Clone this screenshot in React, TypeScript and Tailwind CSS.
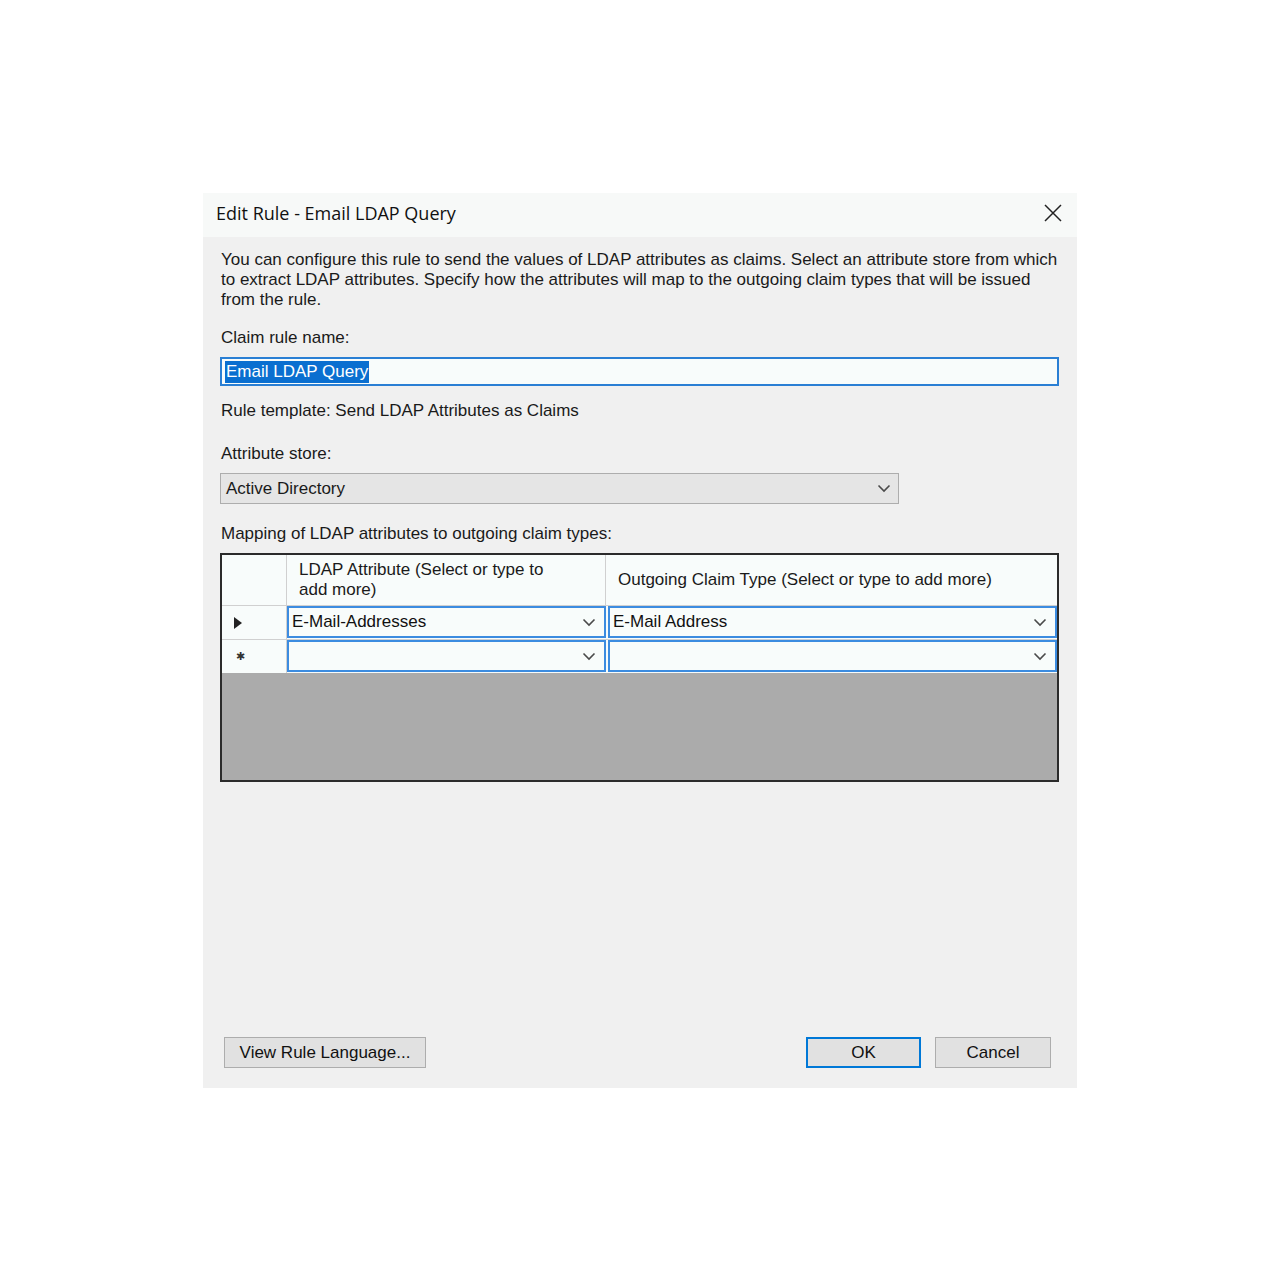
import React from "react";

const font = { fontFamily: '"Liberation Sans", Arial, sans-serif' };

const Chevron = () => (
  <svg width="14" height="9" viewBox="0 0 14 9" className="shrink-0">
    <path d="M1.5 1.5 L7 7 L12.5 1.5" fill="none" stroke="#4a4a4a" strokeWidth="1.6" />
  </svg>
);

const GridCombo = ({ value, w }: { value: string; w: string }) => (
  <div className={`flex h-[32px] ${w} items-center justify-between border-2 border-[#3c8ce0] bg-[#f8fcfb] pl-[3px] pr-[8px]`}>
    <span className="text-[17px] text-[#111]">{value}</span>
    <Chevron />
  </div>
);

export default function App() {
  return (
    <div className="flex h-[1280px] w-[1280px] bg-white" style={font}>
      <div className="ml-[203px] mt-[193px] flex h-[895px] w-[874px] flex-col bg-[#f0f0f0]">
        <div className="flex h-[44px] items-center justify-between bg-[#f7f9f8] pb-[4px] pl-[13px] pr-[14px]">
          <span className="text-[18px] text-[#111]" style={{ fontFamily: '"Open Sans", "Noto Sans", sans-serif' }}>
            Edit Rule - Email LDAP Query
          </span>
          <svg width="20" height="20" viewBox="0 0 20 20">
            <path d="M2 2 L18 18 M18 2 L2 18" stroke="#222" strokeWidth="1.5" />
          </svg>
        </div>

        <div className="flex flex-1 flex-col pl-[17px] pr-[18px] text-[17px] leading-[20px] text-[#1a1a1a]">
          <p className="mt-[13px] pl-[1px]">
            You can configure this rule to send the values of LDAP attributes as claims. Select an attribute store from which
            to extract LDAP attributes. Specify how the attributes will map to the outgoing claim types that will be issued
            from the rule.
          </p>

          <p className="mt-[18px] pl-[1px]">Claim rule name:</p>
          <div className="mt-[9px] flex h-[29px] w-[839px] items-center border-2 border-[#2a7fd4] bg-[#f8fcfb] pl-[3px]">
            <span className="bg-[#0a6fd0] px-[1px] leading-[22px] text-white">Email LDAP Query</span>
          </div>

          <p className="mt-[15px] pl-[1px]">Rule template: Send LDAP Attributes as Claims</p>

          <p className="mt-[23px] pl-[1px]">Attribute store:</p>
          <div className="mt-[9px] flex h-[31px] w-[679px] items-center justify-between border border-[#adadad] bg-[#e5e5e5] pl-[5px] pr-[7px]">
            <span>Active Directory</span>
            <Chevron />
          </div>

          <p className="mt-[20px] pl-[1px]">Mapping of LDAP attributes to outgoing claim types:</p>
          <div className="mt-[9px] flex h-[229px] w-[839px] flex-col border-2 border-[#2b2b2b] bg-[#ababab]">
            <div className="flex h-[51px] border-b border-[#d0d0d0] bg-[#f8fcfb]">
              <div className="w-[65px] border-r border-[#d0d0d0]" />
              <div className="flex w-[319px] items-center border-r border-[#d0d0d0] pl-[12px] leading-[20px]">
                LDAP Attribute (Select or type to
                <br />
                add more)
              </div>
              <div className="flex flex-1 items-center pl-[12px]">Outgoing Claim Type (Select or type to add more)</div>
            </div>
            <div className="flex h-[34px] border-b border-[#d0d0d0] bg-[#f8fcfb]">
              <div className="flex w-[65px] items-center border-r border-[#d0d0d0] pl-[12px]">
                <svg width="8" height="12" viewBox="0 0 8 12">
                  <path d="M0 0 L8 6 L0 12 Z" fill="#222" />
                </svg>
              </div>
              <GridCombo value="E-Mail-Addresses" w="w-[319px]" />
              <div className="w-[2px]" />
              <GridCombo value="E-Mail Address" w="w-[449px]" />
            </div>
            <div className="flex h-[33px] bg-[#f8fcfb]">
              <div className="flex w-[65px] items-center border-r border-[#d0d0d0] pl-[14px]">
                <span className="text-[11px] leading-none text-[#333]">✱</span>
              </div>
              <GridCombo value="" w="w-[319px]" />
              <div className="w-[2px]" />
              <GridCombo value="" w="w-[449px]" />
            </div>
            <div className="flex-1" />
          </div>

          <div className="flex-1" />

          <div className="mb-[20px] flex items-center">
            <button className="ml-[4px] h-[31px] w-[202px] border border-[#adadad] bg-[#e1e1e1] text-[17px] text-[#111]">
              View Rule Language...
            </button>
            <div className="flex-1" />
            <button className="h-[31px] w-[115px] border-2 border-[#0078d7] bg-[#e1e1e1] text-[17px] text-[#111]">
              OK
            </button>
            <button className="ml-[14px] mr-[8px] h-[31px] w-[116px] border border-[#adadad] bg-[#e1e1e1] text-[17px] text-[#111]">
              Cancel
            </button>
          </div>
        </div>
      </div>
    </div>
  );
}
